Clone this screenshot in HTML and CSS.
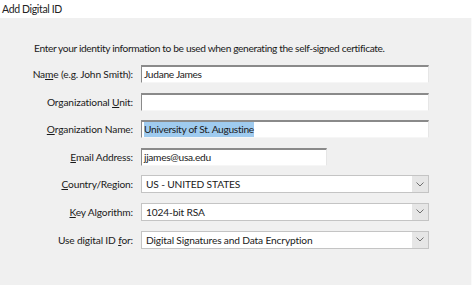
FILE: index.html
```html
<!DOCTYPE html>
<html lang="en">
<head>
    <meta charset="UTF-8">
    <meta name="viewport" content="width=device-width, initial-scale=1.0">
    <title>Add Digital ID</title>
    <link rel="stylesheet" href="styles.css">
</head>
<body>
    <div class="dialog-title">Add Digital ID</div>

    <div class="dialog-panel">
        <p class="intro">Enter your identity information to be used when generating the self-signed certificate.</p>

        <div class="form-grid">
            <label class="field-label">Na<u>m</u>e (e.g. John Smith):</label>
            <div class="text-box">Judane James</div>

            <label class="field-label">Organizational <u>U</u>nit:</label>
            <div class="text-box"></div>

            <label class="field-label"><u>O</u>rganization Name:</label>
            <div class="text-box"><span class="selected">University of St. Augustine</span></div>

            <label class="field-label"><u>E</u>mail Address:</label>
            <div class="text-box short">jjames@usa.edu</div>

            <label class="field-label"><u>C</u>ountry/Region:</label>
            <div class="combo">
                <span class="combo-value">US - UNITED STATES</span>
                <span class="combo-arrow">
                    <svg width="8" height="5" viewBox="0 0 8 5"><path d="M0.5 0.5 L4 4 L7.5 0.5" fill="none" stroke="#707070" stroke-width="1"/></svg>
                </span>
            </div>

            <label class="field-label"><u>K</u>ey Algorithm:</label>
            <div class="combo">
                <span class="combo-value">1024-bit RSA</span>
                <span class="combo-arrow">
                    <svg width="8" height="5" viewBox="0 0 8 5"><path d="M0.5 0.5 L4 4 L7.5 0.5" fill="none" stroke="#707070" stroke-width="1"/></svg>
                </span>
            </div>

            <label class="field-label">Use digital ID <u>f</u>or:</label>
            <div class="combo">
                <span class="combo-value">Digital Signatures and Data Encryption</span>
                <span class="combo-arrow">
                    <svg width="8" height="5" viewBox="0 0 8 5"><path d="M0.5 0.5 L4 4 L7.5 0.5" fill="none" stroke="#707070" stroke-width="1"/></svg>
                </span>
            </div>
        </div>
    </div>
</body>
</html>
```

FILE: styles.css
```css
body {
    margin: 0;
    background-color: #fff;
    font-family: 'Lato', 'Noto Sans', sans-serif;
    font-size: 10.2px;
    letter-spacing: -0.15px;
    color: #1a1a1a;
}

.dialog-title {
    height: 18px;
    line-height: 18px;
    padding-left: 2px;
    font-size: 10.5px;
    letter-spacing: -0.35px;
    color: #222;
}

.dialog-panel {
    width: 472px;
    height: 267px;
    background-color: #f0f0f0;
    border-right: 1px solid #fafafa;
    box-sizing: border-box;
    padding-top: 22px;
}

.intro {
    margin: 0 0 9px 34px;
    line-height: 16px;
    letter-spacing: -0.36px;
    white-space: nowrap;
}

.form-grid {
    display: grid;
    grid-template-columns: 133px 288px;
    column-gap: 8px;
    row-gap: 9.6px;
    grid-auto-rows: 18px;
    align-items: center;
}

.field-label {
    text-align: right;
    white-space: nowrap;
}

.text-box {
    height: 18px;
    box-sizing: border-box;
    background-color: #fff;
    border-top: 2px solid #8a8a8a;
    border-left: 1px solid #8a8a8a;
    border-right: 1px solid #e6e6e6;
    border-bottom: 1px solid #f6f6f6;
    padding-left: 2px;
    line-height: 14px;
    letter-spacing: -0.3px;
    white-space: nowrap;
}

.text-box.short {
    width: 186px;
}

.selected {
    background-color: #9fcbef;
    padding: 1px 0 2px;
}

.combo {
    display: flex;
    height: 18px;
    box-sizing: border-box;
    background-color: #fff;
    border: 1px solid #c4c4c4;
}

.combo-value {
    flex: 1;
    padding-left: 4px;
    line-height: 16px;
    white-space: nowrap;
}

.combo-arrow {
    width: 16px;
    background-color: #e6e6e6;
    display: flex;
    align-items: center;
    justify-content: center;
}
```
